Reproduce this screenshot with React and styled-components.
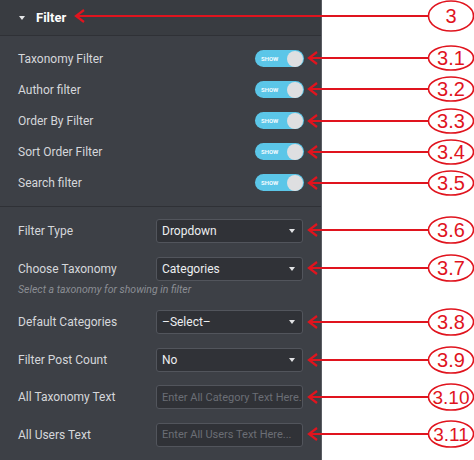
import React from 'react';
import styled, { createGlobalStyle } from 'styled-components';

const GlobalStyle = createGlobalStyle`
	html, body {
		margin: 0;
		padding: 0;
		background: #ffffff;
	}
	* {
		box-sizing: border-box;
	}
`;

const Page = styled.div`
	position: relative;
	width: 474px;
	height: 460px;
	display: flex;
	overflow: hidden;
	font-family: Roboto, 'Liberation Sans', sans-serif;
`;

const Panel = styled.div`
	width: 322px;
	height: 460px;
	background: #3d4046;
	border-right: 1px solid #5a5d63;
	display: flex;
	flex-direction: column;
`;

const Blank = styled.div`
	flex: 1;
	background: #ffffff;
`;

const Header = styled.div`
	height: 36px;
	display: flex;
	align-items: center;
	padding-left: 19px;
	gap: 11px;
	background: #393c41;
	border-bottom: 1px solid #2f3136;
	color: #ffffff;
	font-size: 13px;
	font-weight: 700;
`;

const Caret = styled.span`
	width: 0;
	height: 0;
	border-left: 3.5px solid transparent;
	border-right: 3.5px solid transparent;
	border-top: 4px solid #e6e7e9;
	margin-top: 1px;
`;

const Section = styled.div`
	display: flex;
	flex-direction: column;
	padding: ${(p) => p.$pad};
	gap: ${(p) => p.$gap || 0}px;
	border-bottom: ${(p) => (p.$divider ? '1px solid #2f3136' : 'none')};
`;

const ToggleRow = styled.div`
	height: 31px;
	display: flex;
	align-items: center;
	justify-content: space-between;
	padding: 0 17px 0 18px;
`;

const Label = styled.span`
	font-size: 12px;
	color: #d5d7db;
	width: 138px;
	flex-shrink: 0;
`;

const Switch = styled.div`
	width: 49px;
	height: 17px;
	border-radius: 9px;
	background: #5bc6e8;
	display: flex;
	align-items: center;
	justify-content: space-between;
	padding: 0 1px 0 6px;
`;

const SwitchText = styled.span`
	font-size: 6px;
	font-weight: 700;
	color: #f2fbff;
`;

const Knob = styled.span`
	width: 16px;
	height: 16px;
	border-radius: 50%;
	background: #dedfe1;
`;

const ControlBlock = styled.div`
	display: flex;
	flex-direction: column;
	padding: 0 18px;
`;

const ControlRow = styled.div`
	display: flex;
	align-items: center;
	height: 24px;
`;

const Field = styled.div`
	width: 148px;
	height: 24px;
	border: 1px solid #52555c;
	border-radius: 3px;
	background: #303237;
	display: flex;
	align-items: center;
	justify-content: space-between;
	padding: ${(p) => (p.$placeholder ? '0 1px 0 5px' : '0 7px 0 5px')};
	font-size: ${(p) => (p.$placeholder ? '11px' : '12px')};
	color: ${(p) => (p.$placeholder ? '#6b6e75' : '#eceef0')};
	white-space: nowrap;
	overflow: hidden;
`;

const SelectCaret = styled.span`
	width: 0;
	height: 0;
	border-left: 3.5px solid transparent;
	border-right: 3.5px solid transparent;
	border-top: 4px solid #e2e3e5;
`;

const Description = styled.div`
	margin-top: 2px;
	font-size: 10.5px;
	line-height: 14px;
	font-style: italic;
	color: #8b8e94;
`;

const Overlay = styled.svg`
	position: absolute;
	left: 0;
	top: 0;
	pointer-events: none;
`;

const toggles = [
	'Taxonomy Filter',
	'Author filter',
	'Order By Filter',
	'Sort Order Filter',
	'Search filter',
];

const callouts = [
	{ label: '3', y: 16, tip: 75, ry: 15 },
	{ label: '3.1', y: 58, tip: 308 },
	{ label: '3.2', y: 89, tip: 308 },
	{ label: '3.3', y: 121, tip: 308 },
	{ label: '3.4', y: 152, tip: 308 },
	{ label: '3.5', y: 183, tip: 308 },
	{ label: '3.6', y: 230, tip: 308, ry: 13 },
	{ label: '3.7', y: 268, tip: 308, ry: 13 },
	{ label: '3.8', y: 322, tip: 308, ry: 13 },
	{ label: '3.9', y: 360, tip: 308, ry: 13 },
	{ label: '3.10', y: 397, tip: 308, ry: 13 },
	{ label: '3.11', y: 434, tip: 308, ry: 13 },
];

const RED = '#e0141e';

function Callouts() {
	return (
		<Overlay width="474" height="460" viewBox="0 0 474 460">
			{callouts.map((c) => (
				<g key={c.label}>
					<line x1={c.tip + 1} y1={c.y} x2="429" y2={c.y} stroke={RED} strokeWidth="2" />
					<polyline
						points={`${c.tip + 9},${c.y - 6} ${c.tip + 1},${c.y} ${c.tip + 9},${c.y + 6}`}
						fill="none"
						stroke={RED}
						strokeWidth="2.2"
					/>
					<ellipse cx="451" cy={c.y} rx="22.5" ry={c.ry || 12} fill="#ffffff" stroke={RED} strokeWidth="1.6" />
					<text
						x="451"
						y={c.y + 7}
						textAnchor="middle"
						fontFamily="'Liberation Sans', Arial, sans-serif"
						fontSize={c.label.length > 3 ? 19 : 20}
						fill={RED}
					>
						{c.label}
					</text>
				</g>
			))}
		</Overlay>
	);
}

export default function App() {
	return (
		<Page>
			<GlobalStyle />
			<Panel>
				<Header>
					<Caret />
					Filter
				</Header>
				<Section $pad="7px 0 8px" $divider>
					{toggles.map((t) => (
						<ToggleRow key={t}>
							<Label>{t}</Label>
							<Switch>
								<SwitchText>SHOW</SwitchText>
								<Knob />
							</Switch>
						</ToggleRow>
					))}
				</Section>
				<Section $pad="12px 0 0" $gap={13.5}>
					<ControlBlock>
						<ControlRow>
							<Label>Filter Type</Label>
							<Field>Dropdown<SelectCaret /></Field>
						</ControlRow>
					</ControlBlock>
					<ControlBlock>
						<ControlRow>
							<Label>Choose Taxonomy</Label>
							<Field>Categories<SelectCaret /></Field>
						</ControlRow>
						<Description>Select a taxonomy for showing in filter</Description>
					</ControlBlock>
					<ControlBlock>
						<ControlRow>
							<Label>Default Categories</Label>
							<Field>–Select–<SelectCaret /></Field>
						</ControlRow>
					</ControlBlock>
					<ControlBlock>
						<ControlRow>
							<Label>Filter Post Count</Label>
							<Field>No<SelectCaret /></Field>
						</ControlRow>
					</ControlBlock>
					<ControlBlock>
						<ControlRow>
							<Label>All Taxonomy Text</Label>
							<Field $placeholder>Enter All Category Text Here.</Field>
						</ControlRow>
					</ControlBlock>
					<ControlBlock>
						<ControlRow>
							<Label>All Users Text</Label>
							<Field $placeholder>Enter All Users Text Here...</Field>
						</ControlRow>
					</ControlBlock>
				</Section>
			</Panel>
			<Blank />
			<Callouts />
		</Page>
	);
}
